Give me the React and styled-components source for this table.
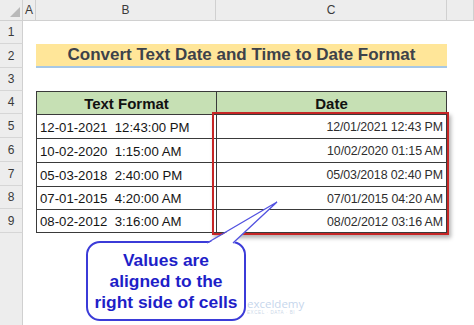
import React from 'react';
import styled, { createGlobalStyle } from 'styled-components';

const Global = createGlobalStyle`
  html, body { margin: 0; padding: 0; background: #fff; }
  body { width: 474px; height: 325px; overflow: hidden; font-family: "Liberation Sans", Arial, sans-serif; }
`;

const Sheet = styled.div`
  position: relative;
  width: 474px;
  height: 325px;
  display: grid;
  grid-template-columns: 23px 13px 180px 231px 1fr;
  grid-template-rows: 21px 23px 24px 23px 23px 24px 24px 24px 23px 24px 1fr;
  overflow: hidden;
  background: #fff;
`;

const Corner = styled.div`
  grid-column: 1;
  grid-row: 1;
  position: relative;
  box-sizing: border-box;
  background: #ededed;
  border-right: 1px solid #d0d0d0;
  border-bottom: 1px solid #d0d0d0;
  &::after {
    content: '';
    position: absolute;
    right: 2px;
    bottom: 3px;
    width: 0;
    height: 0;
    border-left: 10px solid transparent;
    border-bottom: 10px solid #b9b9b9;
  }
`;

const ColHeader = styled.div`
  grid-row: 1;
  grid-column: ${p => p.$col};
  box-sizing: border-box;
  background: #ededed;
  border-right: 1px solid #d0d0d0;
  border-bottom: 1px solid #d0d0d0;
  display: flex;
  align-items: center;
  justify-content: center;
  font-size: 12px;
  color: #3a3a3a;
`;

const RowHeader = styled.div`
  grid-column: 1;
  grid-row: ${p => p.$row};
  box-sizing: border-box;
  background: #ededed;
  border-right: 1px solid #d0d0d0;
  border-bottom: ${p => (p.$last ? 'none' : '1px solid #d6d6d6')};
  display: flex;
  align-items: center;
  justify-content: center;
  font-size: 12px;
  color: #3a3a3a;
`;

const Title = styled.div`
  grid-column: 3 / 5;
  grid-row: 3;
  box-sizing: border-box;
  background: #ffe699;
  border-bottom: 2px solid #a6c8e6;
  display: flex;
  align-items: center;
  justify-content: center;
  font-weight: bold;
  font-size: 17px;
  color: #3d424a;
  white-space: nowrap;
`;

const Table = styled.div`
  grid-column: 3 / 5;
  grid-row: 5 / 11;
  display: grid;
  grid-template-columns: 179px 229px;
  grid-template-rows: 22px 23px 23px 23px 22px 22px;
  gap: 1px;
  padding: 1px;
  background: #3a3a3a;
`;

const HeadCell = styled.div`
  background: #c6e0b4;
  display: flex;
  align-items: center;
  justify-content: center;
  font-weight: bold;
  font-size: 15px;
  color: #111;
`;

const DataCell = styled.div`
  background: #fff;
  display: flex;
  align-items: center;
  justify-content: ${p => (p.$right ? 'flex-end' : 'flex-start')};
  padding: ${p => (p.$right ? '1px 3px 0 0' : '1px 0 0 3px')};
  font-size: ${p => (p.$right ? '12.4px' : '13.2px')};
  letter-spacing: ${p => (p.$right ? '-0.1px' : '0')};
  color: ${p => (p.$right ? '#2e2e2e' : '#151515')};
  white-space: pre;
`;

const Highlight = styled.div`
  position: absolute;
  left: 212px;
  top: 112px;
  width: 237px;
  height: 123px;
  box-sizing: border-box;
  border: 2px solid #c62626;
  box-shadow: 2px 3px 4px rgba(0, 0, 0, 0.3);
  pointer-events: none;
`;

const Callout = styled.div`
  position: absolute;
  left: 86px;
  top: 241px;
  width: 160px;
  height: 80px;
  box-sizing: border-box;
  border: 2px solid #3b3bd8;
  border-radius: 14px;
  background: #fff;
  display: flex;
  flex-direction: column;
  align-items: center;
  justify-content: center;
  font-weight: bold;
  font-size: 17.4px;
  line-height: 21px;
  color: #1e1ec8;
  text-align: center;
  white-space: nowrap;
`;

const Tail = styled.svg`
  position: absolute;
  left: 204px;
  top: 198px;
  width: 78px;
  height: 48px;
  overflow: visible;
  pointer-events: none;
`;

const Watermark = styled.div`
  position: absolute;
  left: 230px;
  top: 298px;
  display: flex;
  align-items: center;
  gap: 1px;
  opacity: 0.45;
  pointer-events: none;
`;

const WmText = styled.div`
  display: flex;
  flex-direction: column;
  line-height: 1;
`;

const WmName = styled.span`
  font-family: "Open Sans", "Liberation Sans", sans-serif;
  font-size: 11.5px;
  color: #7fa6d6;
`;

const WmSub = styled.span`
  font-size: 4.5px;
  letter-spacing: 0.6px;
  color: #8aa9cc;
  margin-top: 1px;
`;

const rows = [
  ['12-01-2021  12:43:00 PM', '12/01/2021 12:43 PM'],
  ['10-02-2020  1:15:00 AM', '10/02/2020 01:15 AM'],
  ['05-03-2018  2:40:00 PM', '05/03/2018 02:40 PM'],
  ['07-01-2015  4:20:00 AM', '07/01/2015 04:20 AM'],
  ['08-02-2012  3:16:00 AM', '08/02/2012 03:16 AM'],
];

export default function App() {
  return (
    <>
      <Global />
      <Sheet>
        <Corner />
        <ColHeader $col={2}>A</ColHeader>
        <ColHeader $col={3}>B</ColHeader>
        <ColHeader $col={4}>C</ColHeader>
        <ColHeader $col={5} />
        {[1, 2, 3, 4, 5, 6, 7, 8, 9].map(n => (
          <RowHeader key={n} $row={n + 1}>{n}</RowHeader>
        ))}
        <RowHeader $row={11} $last />

        <Title>Convert Text Date and Time to Date Format</Title>

        <Table>
          <HeadCell>Text Format</HeadCell>
          <HeadCell>Date</HeadCell>
          {rows.map(([a, b]) => (
            <React.Fragment key={a}>
              <DataCell>{a}</DataCell>
              <DataCell $right>{b}</DataCell>
            </React.Fragment>
          ))}
        </Table>

        <Highlight />

        <Watermark>
          <svg width="16" height="11" viewBox="0 0 18 12">
            <path d="M1 6 L6 1 L11 6 L6 11 Z" fill="#7fa6d6" />
            <path d="M7 6 L12 1 L17 6 L12 11 Z" fill="#a9c4e6" />
          </svg>
          <WmText>
            <WmName>exceldemy</WmName>
            <WmSub>EXCEL · DATA · BI</WmSub>
          </WmText>
        </Watermark>

        <Callout>
          <span>Values are</span>
          <span>aligned to the</span>
          <span>right side of cells</span>
        </Callout>

        <Tail viewBox="204 198 78 48">
          <polygon points="207,244 277,202 233,244" fill="#fff" />
          <polyline points="207,243 277,202 233,243" fill="none" stroke="#5252e0" strokeWidth="1.3" />
        </Tail>
      </Sheet>
    </>
  );
}
